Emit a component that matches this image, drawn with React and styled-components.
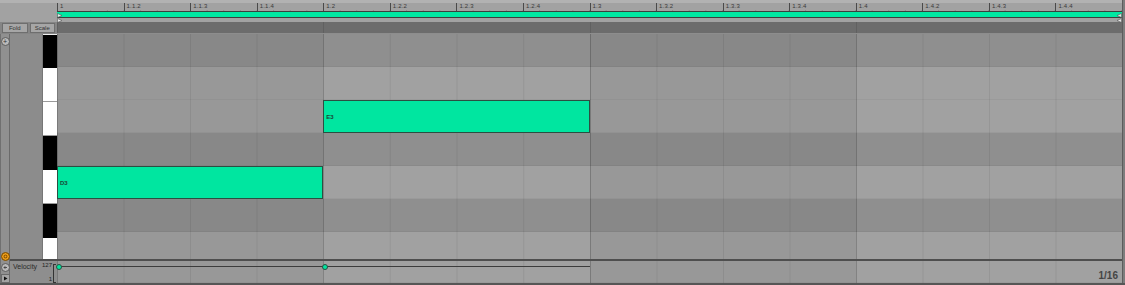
import React from "react";
import styled, { createGlobalStyle } from "styled-components";

const GlobalStyle = createGlobalStyle`
  html, body { margin: 0; padding: 0; background: #5a5a5a; }
  body { font-family: "Liberation Sans", Arial, sans-serif; }
  #root { width: 1125px; height: 285px; overflow: hidden; }
`;

const ROW = 33;

const keys = [
  { name: "F#3", black: true },
  { name: "F3", black: false },
  { name: "E3", black: false },
  { name: "D#3", black: true },
  { name: "D3", black: false },
  { name: "C#3", black: true },
  { name: "C3", black: false },
];

// start / length in sixteenths, row index in keys
const notes = [
  { name: "D3", row: 4, start: 0, length: 4 },
  { name: "E3", row: 2, start: 4, length: 4 },
];

const sixteenths = Array.from({ length: 16 }, (_, i) => {
  const beat = Math.floor(i / 4) + 1;
  const sub = (i % 4) + 1;
  if (i === 0) return "1";
  return sub === 1 ? `1.${beat}` : `1.${beat}.${sub}`;
});

const laneColor = (black, dark) => {
  if (black) return dark ? "#888888" : "#8f8f8f";
  return dark ? "#989898" : "#a1a1a1";
};

export default function App() {
  return (
    <>
      <GlobalStyle />
      <Frame>
        <Corner />
        <Ruler>
          <TickRow>
            {sixteenths.map((label, i) => (
              <Tick key={label} $major={i % 4 === 0}>
                {label}
              </Tick>
            ))}
          </TickRow>
          <LoopBar>
            <Marker $side="left" style={{ top: 1 }}>
              <Tri dir="right" />
            </Marker>
            <Marker $side="right" style={{ top: 1 }}>
              <Tri dir="left" />
            </Marker>
          </LoopBar>
          <MarkerRow>
            <Marker $side="left" style={{ top: 0 }}>
              <Tri dir="right" />
            </Marker>
            <Marker $side="right" style={{ top: 0 }}>
              <Tri dir="left" />
            </Marker>
          </MarkerRow>
        </Ruler>
        <RightEdge />

        <ButtonBar>
          <SmallButton>Fold</SmallButton>
          <SmallButton>Scale</SmallButton>
        </ButtonBar>
        <Band>
          {[0, 1, 2, 3].map((b) => (
            <BandBeat key={b} />
          ))}
        </Band>

        <SideStrip>
          <RoundButton>+</RoundButton>
          <StripIcons>
            <OrangeDot />
            <RoundButton>
              <svg width="5" height="5" viewBox="0 0 5 5">
                <path d="M4 2.5H1M2.3 1.2L1 2.5l1.3 1.3" stroke="#333" strokeWidth="0.8" fill="none" />
              </svg>
            </RoundButton>
            <PlayButton>
              <svg width="5" height="5" viewBox="0 0 5 5">
                <path d="M1 0.5L4.5 2.5 1 4.5Z" fill="#111" />
              </svg>
            </PlayButton>
          </StripIcons>
        </SideStrip>

        <KeyPanel>
          <KeyLabels />
          <Keys>
            {keys.map((k, i) => (
              <Key key={k.name} $black={k.black} $first={i === 0} />
            ))}
          </Keys>
        </KeyPanel>

        <NoteGrid>
          {keys.map((k) => (
            <Lane key={k.name}>
              {[0, 1, 2, 3].map((b) => (
                <Beat key={b} $bg={laneColor(k.black, b % 2 === 0)} />
              ))}
            </Lane>
          ))}
          {notes.map((n) => (
            <Note
              key={n.name}
              style={{
                left: `${(n.start / 16) * 100}%`,
                width: `${(n.length / 16) * 100}%`,
                top: n.row * ROW,
              }}
            >
              {n.name}
            </Note>
          ))}
        </NoteGrid>

        <Separator />

        <VelocityPanel>
          <VelocityName>Velocity</VelocityName>
          <Scale>
            <ScaleNum>127</ScaleNum>
            <ScaleNum>1</ScaleNum>
          </Scale>
          <Bracket />
        </VelocityPanel>
        <VelocityLane>
          {[0, 1, 2, 3].map((b) => (
            <Beat key={b} $bg={laneColor(false, b % 2 === 0)} />
          ))}
          {notes.map((n) => (
            <VelocityBar
              key={n.name}
              style={{
                left: `${(n.start / 16) * 100}%`,
                width: `${(n.length / 16) * 100}%`,
              }}
            >
              <VelocityDot />
            </VelocityBar>
          ))}
          <Quantize>1/16</Quantize>
        </VelocityLane>
      </Frame>
    </>
  );
}

function Tri({ dir }) {
  return (
    <svg width="6" height="5" viewBox="0 0 6 5">
      {dir === "right" ? (
        <path d="M0.5 0.5L5 2.5 0.5 4.5Z" fill="#e8e8e8" stroke="#555" strokeWidth="0.6" />
      ) : (
        <path d="M5.5 0.5L1 2.5 5.5 4.5Z" fill="#e8e8e8" stroke="#555" strokeWidth="0.6" />
      )}
    </svg>
  );
}

const Frame = styled.div`
  display: grid;
  grid-template-columns: 10px 47px 1065px 3px;
  grid-template-rows: 22px 12px 225px 2px 22px 2px;
  width: 1125px;
  height: 285px;
  background: #565656;
`;

const Corner = styled.div`
  grid-column: 1 / 3;
  grid-row: 1;
  background: #a2a2a2;
  border-top: 3px solid #b2b2b2;
`;

const Ruler = styled.div`
  grid-column: 3;
  grid-row: 1;
  display: flex;
  flex-direction: column;
  background: #a2a2a2;
  border-top: 3px solid #b2b2b2;
  position: relative;
`;

const TickRow = styled.div`
  display: grid;
  grid-template-columns: repeat(16, 1fr);
  height: 8px;
  background-image: linear-gradient(to right, #8a8a8a 1px, transparent 1px);
  background-size: 16.64px 1px;
  background-repeat: repeat-x;
  background-position: 0 100%;
`;

const Tick = styled.div`
  font-size: 6px;
  line-height: 7px;
  color: #3a3a3a;
  padding-left: 2px;
  border-left: 1px solid #4a4a4a;
  letter-spacing: 0.2px;
`;

const LoopBar = styled.div`
  height: 5px;
  background: #00e8a2;
  border-top: 1px solid #3d3d3d;
  border-bottom: 1px solid #3d3d3d;
  position: relative;
`;

const MarkerRow = styled.div`
  flex: 1;
  position: relative;
  background: #a2a2a2;
`;

const Marker = styled.div`
  position: absolute;
  ${(p) => (p.$side === "left" ? "left: 0;" : "right: 0;")}
  line-height: 0;
`;

const RightEdge = styled.div`
  grid-column: 4;
  grid-row: 1 / 6;
  background: #7d7d7d;
  border-left: 1px solid #5d5d5d;
`;

const ButtonBar = styled.div`
  grid-column: 1 / 3;
  grid-row: 2;
  display: flex;
  gap: 2px;
  align-items: center;
  padding: 0 2px;
  background: #858585;
`;

const SmallButton = styled.div`
  flex: 1;
  height: 8px;
  background: #a6a6a6;
  border: 1px solid #6e6e6e;
  font-size: 6px;
  line-height: 8px;
  text-align: center;
  color: #333;
`;

const Band = styled.div`
  grid-column: 3;
  grid-row: 2;
  display: grid;
  grid-template-columns: repeat(4, 1fr);
  background: #6c6c6c;
  border-bottom: 1px solid #8d8d8d;
`;

const BandBeat = styled.div`
  border-left: 1px solid #606060;
`;

const SideStrip = styled.div`
  grid-column: 1;
  grid-row: 3 / 6;
  display: flex;
  flex-direction: column;
  justify-content: space-between;
  align-items: center;
  padding: 3px 0 0;
  background: #909090;
  border-left: 1px solid #707070;
  border-right: 1px solid #6a6a6a;
  position: relative;
  z-index: 1;
`;

const StripIcons = styled.div`
  display: flex;
  flex-direction: column;
  align-items: center;
  gap: 2px;
`;

const RoundButton = styled.div`
  width: 7px;
  height: 7px;
  border-radius: 50%;
  background: #b9b9b9;
  border: 1px solid #5c5c5c;
  font-size: 7px;
  line-height: 7px;
  text-align: center;
  color: #333;
  display: flex;
  align-items: center;
  justify-content: center;
`;

const OrangeDot = styled.div`
  width: 7px;
  height: 7px;
  border-radius: 50%;
  background: #f2a21b;
  border: 1px solid #7a4b00;
  box-shadow: inset 0 0 0 1.5px #f2a21b, inset 0 0 0 2.5px #8a5200;
`;

const PlayButton = styled.div`
  width: 7px;
  height: 7px;
  background: #a3a3a3;
  border: 1px solid #6a6a6a;
  display: flex;
  align-items: center;
  justify-content: center;
`;

const KeyPanel = styled.div`
  grid-column: 2;
  grid-row: 3;
  display: flex;
  background: #8c8c8c;
`;

const KeyLabels = styled.div`
  flex: 1;
  border-right: 1px solid #777;
`;

const Keys = styled.div`
  width: 14px;
  display: flex;
  flex-direction: column;
  border-top: 1px solid #f0f0f0;
`;

const Key = styled.div`
  height: ${(p) => (p.$first ? ROW - 1 : ROW)}px;
  flex-shrink: 0;
  background: ${(p) => (p.$black ? "#000" : "#fff")};
  border-bottom: 1px solid ${(p) => (p.$black ? "#000" : "#9a9a9a")};
  &:last-child {
    flex: 1;
    border-bottom: none;
  }
`;

const NoteGrid = styled.div`
  grid-column: 3;
  grid-row: 3;
  display: flex;
  flex-direction: column;
  position: relative;
  overflow: hidden;
`;

const Lane = styled.div`
  height: ${ROW}px;
  flex-shrink: 0;
  display: grid;
  grid-template-columns: repeat(4, 1fr);
  &:last-of-type {
    flex: 1;
  }
`;

const Beat = styled.div`
  background-color: ${(p) => p.$bg};
  background-image: linear-gradient(to right, rgba(0, 0, 0, 0.07) 1px, transparent 1px);
  background-size: 25% 100%;
  box-shadow: inset 1px 0 0 rgba(0, 0, 0, 0.13), inset 0 -1px 0 rgba(0, 0, 0, 0.04);
`;

const Note = styled.div`
  position: absolute;
  height: ${ROW}px;
  box-sizing: border-box;
  background: #00e6a0;
  border: 1px solid #2b4f42;
  font-size: 6px;
  font-weight: bold;
  color: #1d4436;
  display: flex;
  align-items: center;
  padding-left: 2px;
`;

const Separator = styled.div`
  grid-column: 2 / 4;
  grid-row: 4;
  background: #4e4e4e;
`;

const VelocityPanel = styled.div`
  grid-column: 2;
  grid-row: 5;
  display: flex;
  background: #8e8e8e;
  position: relative;
`;

const VelocityName = styled.div`
  flex: 1;
  font-size: 7px;
  color: #2c2c2c;
  padding: 2px 0 0 3px;
`;

const Scale = styled.div`
  display: flex;
  flex-direction: column;
  justify-content: space-between;
  align-items: flex-end;
  padding: 1px 1px 0 0;
`;

const ScaleNum = styled.div`
  font-size: 6px;
  line-height: 7px;
  color: #222;
`;

const Bracket = styled.div`
  width: 2px;
  margin: 3px 1px 0 0;
  border-left: 1px solid #333;
  border-top: 1px solid #333;
  border-bottom: 1px solid #333;
`;

const VelocityLane = styled.div`
  grid-column: 3;
  grid-row: 5;
  display: grid;
  grid-template-columns: repeat(4, 1fr);
  position: relative;
`;

const VelocityBar = styled.div`
  position: absolute;
  top: 5px;
  height: 1px;
  background: #3c3c3c;
`;

const VelocityDot = styled.div`
  position: absolute;
  left: -1px;
  top: -2px;
  width: 4px;
  height: 4px;
  border-radius: 50%;
  background: #00e6a0;
  border: 0.5px solid #2b4f42;
`;

const Quantize = styled.div`
  position: absolute;
  right: 4px;
  bottom: 2px;
  font-size: 10px;
  font-weight: bold;
  color: #454545;
`;
